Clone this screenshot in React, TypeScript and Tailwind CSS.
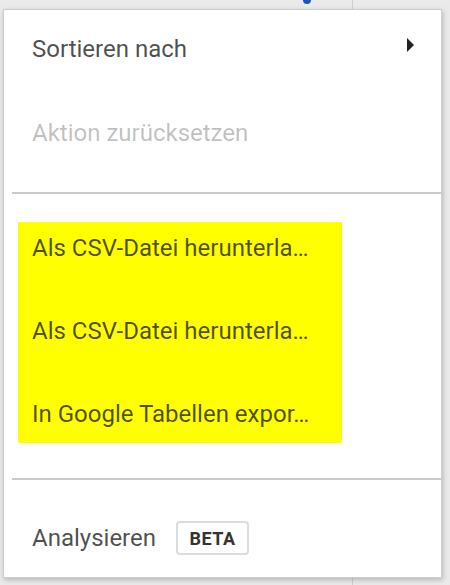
export default function App() {
  return (
    <div
      className="relative h-[585px] w-[450px] overflow-hidden bg-[#eaeaea] pl-[3px] pt-[9px]"
      style={{ fontFamily: "Roboto, 'Noto Sans', sans-serif" }}
    >
      {/* page behind the menu */}
      <div className="absolute left-[352px] top-0 h-full w-px bg-[#cfcfcf]" />
      <div className="absolute left-[303px] top-[-4px] h-2 w-2 rounded-full bg-[#1a56b8]" />

      {/* Menu */}
      <div className="relative z-10 flex h-[569px] w-[439px] flex-col border border-[#cdcdcd] bg-white shadow-[1px_2px_5px_rgba(0,0,0,0.22)]">
        <div className="flex flex-col gap-[56px] pt-[25px] text-[24px] leading-[28px]">
          <div className="flex items-center justify-between pl-[28px] pr-[27px] text-black/70">
            <span>Sortieren nach</span>
            <svg width="7" height="14" viewBox="0 0 7 14" className="mb-[8px]">
              <path d="M0 0 L7 7 L0 14 Z" fill="#222" />
            </svg>
          </div>
          <div className="pl-[28px] text-black/25">Aktion zurücksetzen</div>
        </div>

        <div className="ml-[8px] mt-[45px] h-[2px] bg-[#cacaca]" />

        <div className="ml-[14px] mt-[28px] flex h-[221px] w-[324px] flex-col gap-[55px] bg-[#ffff00] pl-[14px] pt-[12px] text-[24px] leading-[28px] text-black/70">
          <div>Als CSV-Datei herunterla…</div>
          <div>Als CSV-Datei herunterla…</div>
          <div>In Google Tabellen expor…</div>
        </div>

        <div className="ml-[8px] mt-[35px] h-[2px] bg-[#cacaca]" />

        <div className="mt-[41px] flex items-center gap-[20px] pl-[28px]">
          <span className="text-[24px] leading-[28px] text-black/70">Analysieren</span>
          <span className="flex h-[34px] w-[73px] items-center justify-center rounded-[4px] border-2 border-[#dcdcdc] text-[18px] font-bold tracking-[0.5px] text-[#333]">
            BETA
          </span>
        </div>
      </div>
    </div>
  );
}
